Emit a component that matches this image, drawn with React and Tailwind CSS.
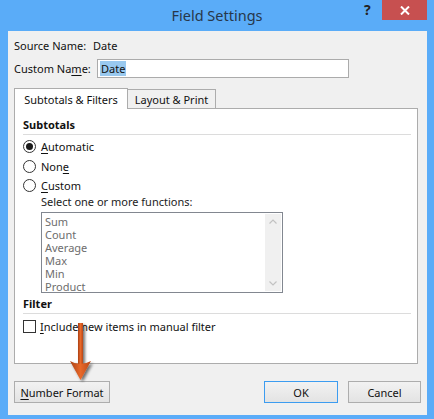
const FONT = { fontFamily: '"Noto Sans", "Segoe UI", sans-serif' };

const functions = ["Sum", "Count", "Average", "Max", "Min", "Product"];

// Label with one underlined access-key letter
const Key = ({ text, at }) => (
  <>
    {text.slice(0, at)}
    <span className="underline underline-offset-2">{text[at]}</span>
    {text.slice(at + 1)}
  </>
);

const Radio = ({ checked, children }) => (
  <div className="flex items-center h-[19.5px]">
    <span className="w-[13px] h-[13px] rounded-full border border-[#333] bg-white flex items-center justify-center">
      {checked && <span className="w-[7px] h-[7px] rounded-full bg-[#1a1a1a]" />}
    </span>
    <span className="ml-[5px]">{children}</span>
  </div>
);

const Section = ({ title }) => (
  <div className="flex flex-col">
    <div className="font-bold leading-[16px]">{title}</div>
    <div className="h-px bg-[#dcdcdc] mt-[1px]" />
  </div>
);

const Button = ({ primary, className = "", children }) => (
  <button
    className={`h-[22px] border bg-gradient-to-b from-[#f2f2f2] to-[#e3e3e3] text-[11px] text-[#111] whitespace-nowrap ${
      primary ? "border-[#3c9cf0]" : "border-[#adadad]"
    } ${className}`}
  >
    {children}
  </button>
);

// Orange callout arrow pointing down at the Number Format button
const Arrow = () => (
  <svg width="30" height="62" viewBox="0 0 30 62" className="absolute left-[66px] top-[321px] pointer-events-none">
    <defs>
      <linearGradient id="shaft" x1="0" x2="1" y1="0" y2="0">
        <stop offset="0" stopColor="#a93f14" />
        <stop offset="0.5" stopColor="#e8692a" />
        <stop offset="1" stopColor="#b94718" />
      </linearGradient>
      <filter id="sh" x="-50%" y="-20%" width="200%" height="150%">
        <feGaussianBlur in="SourceAlpha" stdDeviation="1.6" />
        <feOffset dx="2" dy="2" result="b" />
        <feComponentTransfer>
          <feFuncA type="linear" slope="0.55" />
        </feComponentTransfer>
        <feMerge>
          <feMergeNode />
          <feMergeNode in="SourceGraphic" />
        </feMerge>
      </filter>
    </defs>
    <g filter="url(#sh)">
      <rect x="12" y="2" width="5" height="42" fill="url(#shaft)" />
      <path d="M4 40 Q14 46 25 40 L14.5 59 Z" fill="url(#shaft)" />
    </g>
  </svg>
);

export default function App() {
  return (
    <div
      className="w-[434px] h-[419px] bg-[#5aacf8] flex flex-col relative text-[11px] leading-[15px] text-[#111] whitespace-nowrap"
      style={FONT}
    >
      {/* title bar */}
      <div className="h-[31px] relative flex items-center justify-center">
        <span className="text-[14.5px] text-[#27374a] -mt-[1px]">Field Settings</span>
        <span className="absolute left-[364px] top-[2px] text-[14px] font-bold text-[#222]">?</span>
        <div className="absolute left-[382px] top-0 w-[45px] h-[20px] bg-[#c75050] flex items-center justify-center">
          <svg width="10" height="9" viewBox="0 0 10 9">
            <path d="M1 0.5 L9 8.5 M9 0.5 L1 8.5" stroke="#fff" strokeWidth="2" />
          </svg>
        </div>
      </div>

      {/* client area */}
      <div className="ml-[8px] mr-[7px] mb-[4px] flex-1 bg-[#f0f0f0] flex flex-col px-[6px] pt-[6px]">
        <div className="flex h-[16px] items-center">
          <span className="w-[79px]">Source Name:</span>
          <span>Date</span>
        </div>
        <div className="flex items-center mt-[6px] h-[19px]">
          <span className="w-[83px]">
            Custom Na<span className="underline underline-offset-2">m</span>e:
          </span>
          <div className="w-[252px] h-[19px] border border-[#ababab] bg-white flex items-center px-[2px]">
            <span className="bg-[#99c9ef] leading-[15px] px-[1px]">Date</span>
          </div>
        </div>

        {/* tabs */}
        <div className="flex items-end mt-[9px] h-[21px]">
          <div className="w-[114px] h-[21px] bg-white border border-b-0 border-[#acacac] flex items-center justify-center relative z-10 -mb-px">
            Subtotals &amp; Filters
          </div>
          <div className="w-[88px] h-[19px] bg-[#f0f0f0] border border-l-0 border-b-0 border-[#acacac] flex items-center justify-center">
            Layout &amp; Print
          </div>
        </div>
        <div className="w-[404px] h-[256px] bg-white border border-[#acacac] flex flex-col pl-[8px] pr-[6px] pt-[8px]">
          <Section title="Subtotals" />
          <div className="mt-[2px] flex flex-col">
            <Radio checked>
              <Key text="Automatic" at={0} />
            </Radio>
            <Radio>
              <Key text="None" at={3} />
            </Radio>
            <Radio>
              <Key text="Custom" at={0} />
            </Radio>
          </div>
          <div className="ml-[18px] -mt-[1px] text-[#222] leading-[14px]">Select one or more functions:</div>
          <div className="ml-[18px] mt-[3.5px] w-[242px] h-[81px] border border-[#828790] bg-white flex">
            <div className="flex-1 flex flex-col pl-[3px] pt-[1.5px] text-[#6d6d6d]">
              {functions.map((f) => (
                <div key={f} className="h-[13px] leading-[13px]">
                  {f}
                </div>
              ))}
            </div>
            <div className="w-[16px] m-[1px] bg-[#f0f0f0] flex flex-col justify-between items-center py-[5px]">
              <svg width="8" height="5" viewBox="0 0 8 5">
                <path d="M0.5 4.5 L4 1 L7.5 4.5" fill="none" stroke="#c2c2c2" strokeWidth="1.2" />
              </svg>
              <svg width="8" height="5" viewBox="0 0 8 5">
                <path d="M0.5 0.5 L4 4 L7.5 0.5" fill="none" stroke="#c2c2c2" strokeWidth="1.2" />
              </svg>
            </div>
          </div>
          <div className="mt-[3px]">
            <Section title="Filter" />
          </div>
          <div className="flex items-center mt-[6px] h-[13px]">
            <span className="w-[13px] h-[13px] border border-[#333] bg-white" />
            <span className="ml-[4px]">
              <Key text="Include new items in manual filter" at={0} />
            </span>
          </div>
        </div>

        {/* buttons */}
        <div className="flex mt-[17px]">
          <Button className="w-[96px]">
            <Key text="Number Format" at={0} />
          </Button>
          <Button primary className="w-[74px] ml-auto">
            OK
          </Button>
          <Button className="w-[73px] ml-[10px]">Cancel</Button>
        </div>
      </div>

      <Arrow />
    </div>
  );
}
